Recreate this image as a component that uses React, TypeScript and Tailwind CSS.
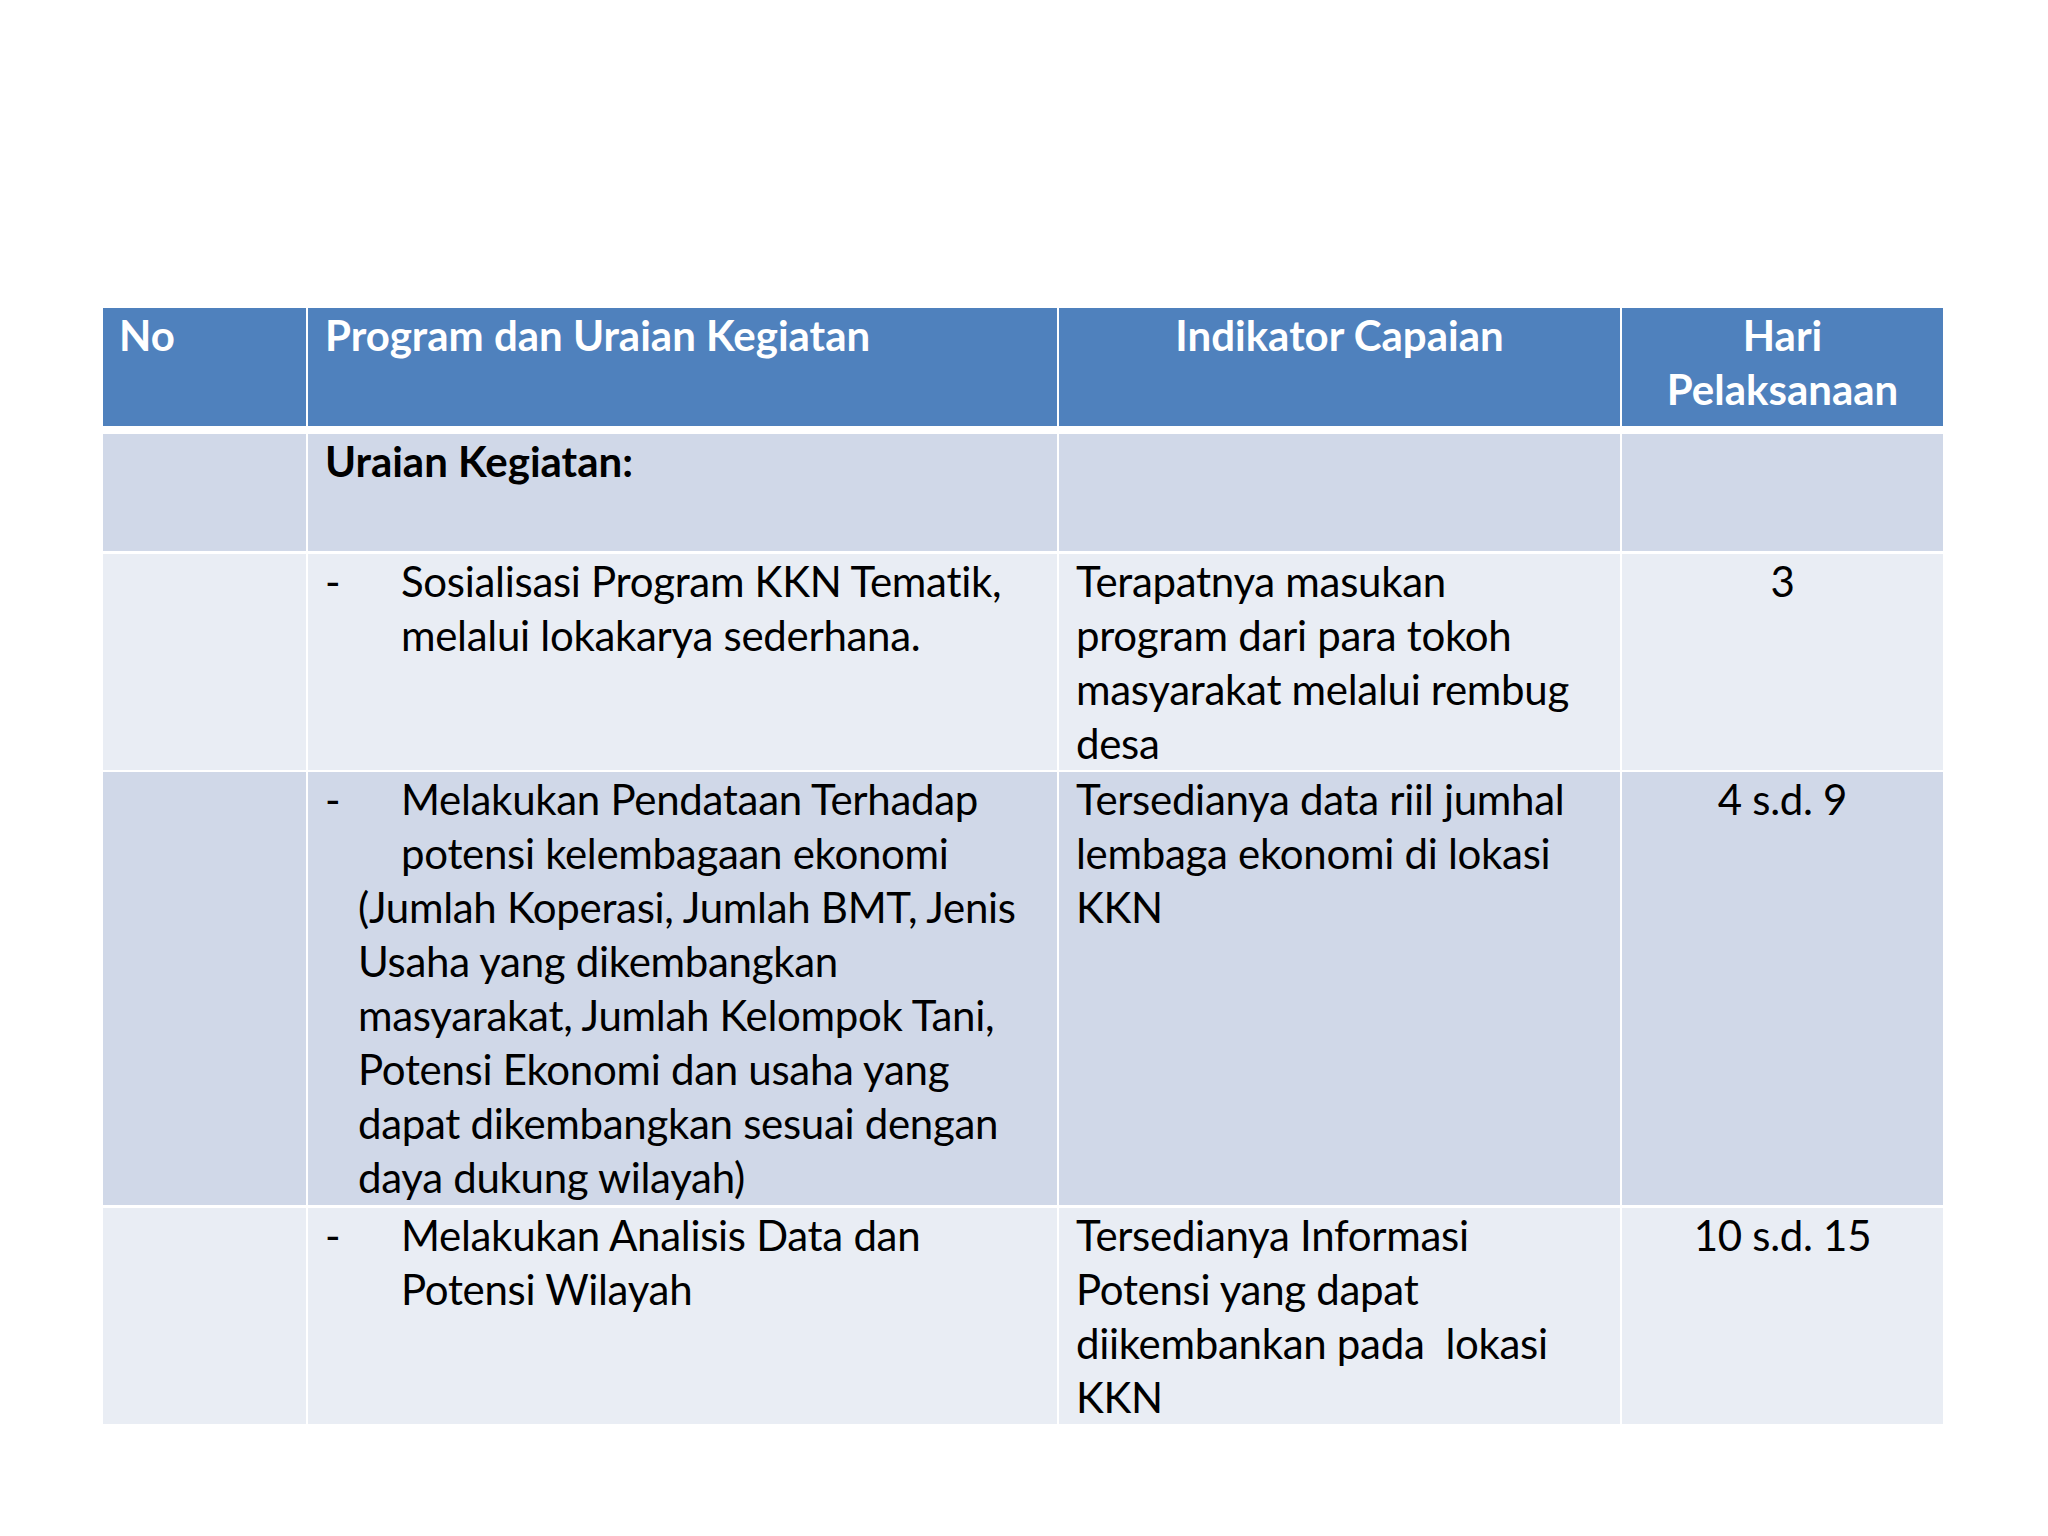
import React from "react";

const font = { fontFamily: "Lato, 'Open Sans', sans-serif" };

function Row({
  bg,
  h,
  c1,
  c2,
  c3,
  c4,
}: {
  bg: string;
  h: string;
  c1?: React.ReactNode;
  c2?: React.ReactNode;
  c3?: React.ReactNode;
  c4?: React.ReactNode;
}) {
  return (
    <div className={`grid grid-cols-[203px_749px_561px_321px] gap-x-[2px] ${h}`}>
      <div className={`${bg} pl-[16px]`}>{c1}</div>
      <div className={`${bg} pl-[17px] pr-[10px]`}>{c2}</div>
      <div className={`${bg} pl-[17px] pr-[10px]`}>{c3}</div>
      <div className={`${bg} text-center`}>{c4}</div>
    </div>
  );
}

function Bullet({ children }: { children: React.ReactNode }) {
  return (
    <div className="flex">
      <span className="w-[76px] shrink-0">-</span>
      <div>{children}</div>
    </div>
  );
}

export default function App() {
  return (
    <div className="w-[2048px] h-[1536px] bg-white pt-[308px] pl-[103px]" style={font}>
      <div className="flex flex-col w-[1840px] text-[42px] leading-[54px] tracking-[-0.3px] text-black whitespace-nowrap">
        <div className="grid grid-cols-[203px_749px_561px_321px] gap-x-[2px] h-[118px] font-bold text-white tracking-normal">
          <div className="bg-[#4f81bd] pl-[16px]">No</div>
          <div className="bg-[#4f81bd] pl-[17px]">Program dan Uraian Kegiatan</div>
          <div className="bg-[#4f81bd] text-center">Indikator Capaian</div>
          <div className="bg-[#4f81bd] text-center">
            Hari
            <br />
            Pelaksanaan
          </div>
        </div>
        <div className="h-[8px]" />
        <Row
          bg="bg-[#d0d8e8]"
          h="h-[117px]"
          c2={<span className="font-bold tracking-normal">Uraian Kegiatan:</span>}
        />
        <div className="h-[3px]" />
        <Row
          bg="bg-[#e9edf4]"
          h="h-[215px]"
          c2={
            <Bullet>
              Sosialisasi Program KKN Tematik,
              <br />
              melalui lokakarya sederhana.
            </Bullet>
          }
          c3={
            <div>
              Terapatnya masukan
              <br />
              program dari para tokoh
              <br />
              masyarakat melalui rembug
              <br />
              desa
            </div>
          }
          c4="3"
        />
        <div className="h-[3px]" />
        <Row
          bg="bg-[#d0d8e8]"
          h="h-[433px]"
          c2={
            <div>
              <Bullet>
                Melakukan Pendataan Terhadap
                <br />
                potensi kelembagaan ekonomi
              </Bullet>
              <div className="pl-[33px]">
                (Jumlah Koperasi, Jumlah BMT, Jenis
                <br />
                Usaha yang dikembangkan
                <br />
                masyarakat, Jumlah Kelompok Tani,
                <br />
                Potensi Ekonomi dan usaha yang
                <br />
                dapat dikembangkan sesuai dengan
                <br />
                daya dukung wilayah)
              </div>
            </div>
          }
          c3={
            <div>
              Tersedianya data riil jumhal
              <br />
              lembaga ekonomi di lokasi
              <br />
              KKN
            </div>
          }
          c4="4 s.d. 9"
        />
        <div className="h-[3px]" />
        <Row
          bg="bg-[#e9edf4]"
          h="h-[216px]"
          c2={
            <Bullet>
              Melakukan Analisis Data dan
              <br />
              Potensi Wilayah
            </Bullet>
          }
          c3={
            <div className="whitespace-pre">
              Tersedianya Informasi
              <br />
              Potensi yang dapat
              <br />
              {"diikembankan pada  lokasi"}
              <br />
              KKN
            </div>
          }
          c4="10 s.d. 15"
        />
      </div>
    </div>
  );
}
